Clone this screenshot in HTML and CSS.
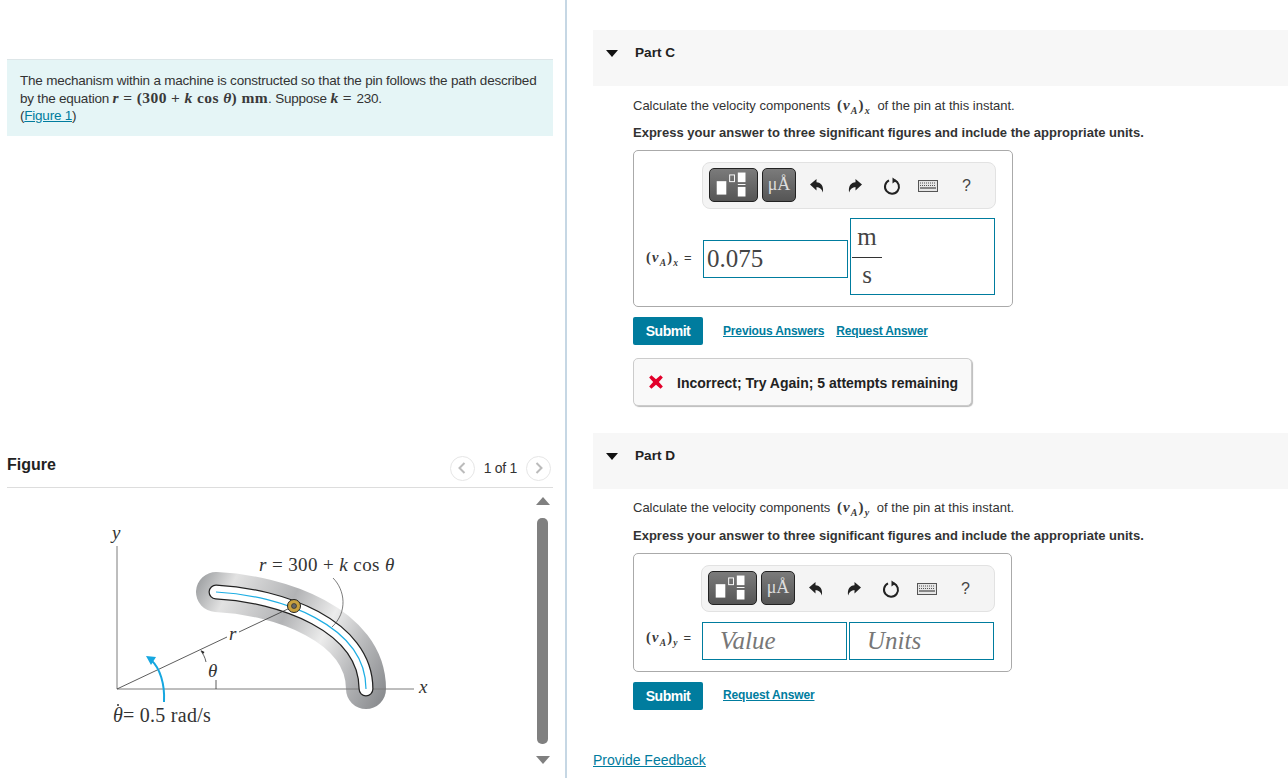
FILE: index.html
```html
<!DOCTYPE html>
<html lang="en">
<head>
<meta charset="utf-8">
<title>Mechanism velocity components</title>
<link rel="stylesheet" href="styles.css">
</head>
<body>
<svg class="defs" width="0" height="0" aria-hidden="true">
  <symbol id="i-undo" viewBox="0 0 16 16"><path d="M1 6.500 7.500 1v3.200c4.600.3 7.400 3.800 6.400 10.300C12.700 11 10.600 9.300 7.500 9.100v3.400z"/></symbol>
  <symbol id="i-redo" viewBox="0 0 16 16"><path d="M15 6.500 8.500 1v3.200C3.900 4.500 1.100 8 2.100 14.500 3.300 11 5.400 9.300 8.500 9.100v3.400z"/></symbol>
  <symbol id="i-reset" viewBox="0 0 18 18"><path d="M6 3.400a7 7 0 1 0 5.500-.2" fill="none" stroke="#222" stroke-width="2"/><path d="M7.500 .2v6.200l-4.200-3z" fill="#222" transform="rotate(180 8.500 3.400)"/></symbol>
  <symbol id="i-keys" viewBox="0 0 20 12"><rect x=".5" y=".5" width="19" height="11" fill="#e6e6e6" stroke="#555"/><path d="M2 3h16M2 5.500h16" stroke="#555" stroke-dasharray="1 1"/><path d="M2 8h16" stroke="#666" stroke-width="1.500"/></symbol>
  <symbol id="i-tpl" viewBox="0 0 49 34"><rect x="7" y="13" width="10" height="14" fill="#fff"/><rect x="20.500" y="6.500" width="5" height="7" fill="none" stroke="#fff"/><rect x="29" y="4" width="8" height="10" fill="#fff"/><rect x="29" y="16" width="8" height="1" fill="#fff"/><rect x="29" y="19" width="8" height="10" fill="#fff"/></symbol>
</svg>
<div class="page">
  <main class="left">
    <section class="intro">
      <p>The mechanism within a machine is constructed so that the pin follows the path described<br>by the equation <span class="m"><i>r</i> = (300 + <i>k</i> cos <i>θ</i>) mm</span>. Suppose <span class="m"><i>k</i> = </span>230.<br>(<a href="#fig">Figure 1</a>)</p>
    </section>
    <section class="figure" id="fig">
      <header class="fig-head">
        <h2>Figure</h2>
        <div class="pager">
          <span class="circle"><svg width="10" height="14" viewBox="0 0 10 14"><path d="M7.500 2 2.500 7l5 5" fill="none" stroke="#bbb" stroke-width="2"/></svg></span>
          <span class="count">1 of 1</span>
          <span class="circle"><svg width="10" height="14" viewBox="0 0 10 14"><path d="M2.500 2l5 5-5 5" fill="none" stroke="#bbb" stroke-width="2"/></svg></span>
        </div>
      </header>
      <div class="fig-body">
        <svg class="diagram" width="430" height="250" viewBox="90 520 430 250">
          <defs>
            <linearGradient id="band" gradientUnits="userSpaceOnUse" x1="195" y1="590" x2="388" y2="690">
              <stop offset="0" stop-color="#a2a4a6"/><stop offset=".14" stop-color="#e2e2e2"/><stop offset=".42" stop-color="#b2b3b5"/><stop offset=".62" stop-color="#ececec"/><stop offset=".8" stop-color="#b8b9bb"/><stop offset="1" stop-color="#8a8c8f"/>
            </linearGradient>
          </defs>
          <path d="M216 592C280 595 366 625 366 689" fill="none" stroke="url(#band)" stroke-width="40" stroke-linecap="round"/>
          <path d="M117 546V689H414" fill="none" stroke="#7d7d7d" stroke-width="1"/>
          <path d="M216 592C280 595 366 625 366 689" fill="none" stroke="#222" stroke-width="15" stroke-linecap="round"/>
          <path d="M216 592C280 595 366 625 366 689" fill="none" stroke="#fff" stroke-width="12.500" stroke-linecap="round"/>
          <path d="M216 592C280 595 366 625 366 689" fill="none" stroke="#1eaee4" stroke-width="1.200"/>
          <path d="M117 689 227 637M239 632 290 608" stroke="#333" stroke-width=".8"/>
          <circle cx="294" cy="606" r="6.500" fill="#c9a13f" stroke="#222"/>
          <circle cx="294" cy="606" r="2.500" fill="#666" stroke="#222" stroke-width=".6"/>
          <path d="M333 578C345 590 348 612 332 627" fill="none" stroke="#444" stroke-width=".7"/>
          <path d="M216 689V680M206 662C205 657 203 654 201 651" fill="none" stroke="#333" stroke-width=".8"/>
          <path d="M203 654l-2.500-4 4 2z" fill="#222"/>
          <path d="M164 702C165 684 160 668 151 660" fill="none" stroke="#16a7e0" stroke-width="2"/>
          <path d="M146 656l10 1-5 8z" fill="#16a7e0"/>
          <circle cx="118" cy="705" r="1" fill="#333"/>
          <g class="dg">
            <text x="112" y="539" class="it">y</text>
            <text x="419" y="693" class="it">x</text>
            <text x="229" y="640" class="it">r</text>
            <text x="208" y="677" class="it">θ</text>
            <text x="259" y="571" class="formula"><tspan class="it">r</tspan> = 300 + <tspan class="it">k</tspan> cos <tspan class="it">θ</tspan></text>
            <text x="113" y="722" class="rate"><tspan class="it">θ</tspan>= 0.5 rad/s</text>
          </g>
        </svg>
        <div class="scroll">
          <span class="tri up"></span>
          <span class="thumb"></span>
          <span class="tri down"></span>
        </div>
      </div>
    </section>
  </main>
  <div class="right">
    <section class="part part-c">
      <header class="part-head"><span class="caret"></span><h3>Part C</h3></header>
      <div class="part-body">
        <p class="q">Calculate the velocity components <span class="m">(<i>v<sub>A</sub></i>)<sub><i>x</i></sub></span> of the pin at this instant.</p>
        <p class="ask">Express your answer to three significant figures and include the appropriate units.</p>
        <div class="answer answer-c">
          <div class="toolbar">
            <button class="tb tb-tpl"><svg width="49" height="34"><use href="#i-tpl"/></svg></button>
            <button class="tb tb-mu">μÅ</button>
            <svg class="ic ic-undo" width="16" height="16"><use href="#i-undo"/></svg>
            <svg class="ic ic-redo" width="16" height="16"><use href="#i-redo"/></svg>
            <svg class="ic ic-reset" width="18" height="18"><use href="#i-reset"/></svg>
            <svg class="ic ic-keys" width="20" height="12"><use href="#i-keys"/></svg>
            <span class="help">?</span>
          </div>
          <div class="row row-c">
            <span class="lab m">(<i>v<sub>A</sub></i>)<sub><i>x</i></sub> <b>=</b></span>
            <div class="field val">0.075</div>
            <div class="field unit"><span class="frac"><span class="num">m</span><span class="den">s</span></span></div>
          </div>
        </div>
        <div class="actions">
          <button class="submit">Submit</button>
          <a href="#prev">Previous Answers</a>
          <a href="#req">Request Answer</a>
        </div>
        <div class="feedback">
          <svg width="16" height="16" viewBox="0 0 14 14"><path d="M1 3 3 1l4 3.500L11 1l2 2-3.500 4L13 11l-2 2-4-3.500L3 13l-2-2 3.500-4z" fill="#e2002b"/></svg>
          <span class="fb-text">Incorrect; Try Again; 5 attempts remaining</span>
        </div>
      </div>
    </section>
    <section class="part part-d">
      <header class="part-head"><span class="caret"></span><h3>Part D</h3></header>
      <div class="part-body">
        <p class="q">Calculate the velocity components <span class="m">(<i>v<sub>A</sub></i>)<sub><i>y</i></sub></span> of the pin at this instant.</p>
        <p class="ask">Express your answer to three significant figures and include the appropriate units.</p>
        <div class="answer answer-d">
          <div class="toolbar">
            <button class="tb tb-tpl"><svg width="49" height="34"><use href="#i-tpl"/></svg></button>
            <button class="tb tb-mu">μÅ</button>
            <svg class="ic ic-undo" width="16" height="16"><use href="#i-undo"/></svg>
            <svg class="ic ic-redo" width="16" height="16"><use href="#i-redo"/></svg>
            <svg class="ic ic-reset" width="18" height="18"><use href="#i-reset"/></svg>
            <svg class="ic ic-keys" width="20" height="12"><use href="#i-keys"/></svg>
            <span class="help">?</span>
          </div>
          <div class="row row-d">
            <span class="lab m">(<i>v<sub>A</sub></i>)<sub><i>y</i></sub> <b>=</b></span>
            <div class="field val ph">Value</div>
            <div class="field val ph">Units</div>
          </div>
        </div>
        <div class="actions">
          <button class="submit">Submit</button>
          <a href="#req">Request Answer</a>
        </div>
      </div>
    </section>
    <a class="provide" href="#feedback">Provide Feedback</a>
  </div>
</div>
</body>
</html>
```
FILE: styles.css
```css
* { box-sizing: border-box; }
html, body { margin: 0; padding: 0; height: 100%; overflow: hidden; }
body { font-family: "Liberation Sans", Arial, sans-serif; color: #333; background: #fff; }
.defs { position: absolute; }
a { color: #007c9e; }
h2, h3, p { margin: 0; }
.page { display: flex; width: 1288px; height: 778px; }

.left { width: 567px; height: 778px; padding: 59px 13px 0 7px; border-right: 2px solid #c6d7e4; flex: none; }
.intro { height: 77px; width: 546px; background: #e5f5f6; border-top: 1px solid #dde6e8; padding: 12px 13px; font-size: 13.5px; line-height: 17px; letter-spacing: -.22px; white-space: nowrap; }
.m { font-family: "Liberation Serif", serif; font-size: 15.500px; font-weight: bold; letter-spacing: .4px; color: #3a3a3a; }
.m sub { font-size: 10px; line-height: 0; }

.figure { margin-top: 314px; width: 546px; }
.fig-head { display: flex; justify-content: space-between; align-items: center; height: 38px; border-bottom: 1px solid #ddd; padding-bottom: 8px; }
.fig-head h2 { font-size: 16px; color: #222; }
.pager { display: flex; align-items: center; gap: 9px; font-size: 14px; letter-spacing: -.3px; margin-top: 7px; padding-right: 2px; }
.circle { width: 25px; height: 25px; border: 1.500px solid #e6e6e6; border-radius: 50%; display: flex; align-items: center; justify-content: center; }

.fig-body { position: relative; height: 290px; }
.diagram { position: absolute; left: 83px; top: 32px; }
.dg text { font-family: "Liberation Serif", serif; font-size: 19px; fill: #333; }
.dg .it { font-style: italic; }
.dg .formula { letter-spacing: .4px; }
.dg .rate { font-size: 20px; letter-spacing: .25px; }
.scroll { position: absolute; left: 529px; top: 9px; width: 13px; display: flex; flex-direction: column; align-items: center; }
.tri { width: 0; height: 0; flex: none; border-left: 7px solid transparent; border-right: 7px solid transparent; }
.tri.up { border-bottom: 8px solid #808080; }
.tri.down { border-top: 8px solid #808080; margin-top: 12px; }
.thumb { width: 11px; height: 226px; margin-top: 13px; background: #808080; border-radius: 5px; flex: none; }

.right { flex: 1; padding: 30px 0 0 26px; }
.part-head { position: relative; height: 56px; background: #f7f7f7; padding: 15px 0 0 42px; }
.part-head h3 { font-size: 13.600px; color: #222; }
.caret { position: absolute; left: 13px; top: 20px; width: 0; height: 0; border-left: 6px solid transparent; border-right: 6px solid transparent; border-top: 7px solid #111; }
.part-body { padding-left: 40px; }
.q { font-size: 13px; line-height: 20px; margin-top: 9px; }
.q .m { font-size: 15px; letter-spacing: 1.100px; margin: 0 3px; }
.ask { font-size: 13px; font-weight: bold; line-height: 18px; margin-top: 8px; letter-spacing: .01px; }

.answer { border: 1px solid #aaa; border-radius: 5px; margin-top: 8px; padding-top: 11px; }
.answer-c { width: 380px; height: 157px; }
.answer-d { width: 379px; height: 119px; }
.toolbar { display: flex; align-items: center; width: 294px; height: 47px; background: #f4f4f4; border: 1px solid #e2e2e2; border-radius: 8px; margin-left: 68px; padding: 0 6px; }
.answer-d .toolbar { margin-left: 67px; }
.tb { height: 34px; margin-bottom: 2px; padding: 0; border: 1px solid #222; border-radius: 5px; background: linear-gradient(#7b7b7b, #555); display: flex; align-items: center; justify-content: center; }
.tb-tpl { width: 49px; }
.tb-mu { width: 34px; margin-left: 4px; color: #ddd; font-family: "Liberation Serif", serif; font-size: 18px; }
.ic { flex: none; }
.ic-undo { margin-left: 13px; fill: #222; }
.ic-redo { margin-left: 22px; fill: #222; }
.ic-reset { margin-left: 20px; }
.ic-keys { margin-left: 17px; }
.help { margin-left: 24px; font-size: 16px; color: #444; }

.row { display: flex; align-items: center; margin-top: 9px; }
.row-c { height: 77px; }
.row-d { margin-top: 10px; }
.lab { width: 69px; padding-left: 12px; font-size: 14.500px; letter-spacing: 1.200px; white-space: nowrap; flex: none; margin-bottom: 7px; }
.lab sub { font-size: 9.500px; }
.lab b { font-family: "Liberation Sans", sans-serif; font-weight: normal; font-size: 13px; letter-spacing: 0; }
.row-c .lab { margin: 1px 0 0; }
.answer-d .lab { width: 68px; }
.field { width: 145px; border: 1px solid #007c9e; background: #fff; flex: none; }
.val { height: 38px; padding-left: 3px; font-family: "Liberation Serif", serif; font-size: 25px; line-height: 35px; color: #444; }
.row-c .val { margin-top: 4px; }
.ph { padding-left: 17px; font-style: italic; color: #777; margin-right: 2px; }
.unit { height: 77px; margin-left: 2px; font-family: "Liberation Serif", serif; font-size: 25px; color: #444; padding-left: 1px; }
.frac { display: inline-flex; flex-direction: column; align-items: center; width: 30px; }
.num { height: 39px; line-height: 36px; border-bottom: 1px solid #333; width: 30px; text-align: center; }
.den { line-height: 34px; }

.actions { display: flex; align-items: center; gap: 12px; height: 28px; margin-top: 10px; font-size: 12px; font-weight: bold; }
.actions a { letter-spacing: -.15px; margin-top: -1px; }
.submit { width: 70px; height: 28px; margin-right: 8px; border: 0; border-radius: 2px; background: #007c9e; color: #fff; font-family: "Liberation Sans", sans-serif; font-size: 14px; font-weight: bold; letter-spacing: -.5px; }
.feedback { display: flex; align-items: center; gap: 13px; width: 339px; height: 48px; margin-top: 13px; padding-left: 14px; background: #f9f9f9; border: 1px solid #ccc; border-radius: 5px; box-shadow: 1px 1px 1px #bbb; font-size: 14px; font-weight: bold; color: #222; }
.fb-text { margin-top: 1px; }
.part-d { margin-top: 27px; }
.part-d .q { margin-top: 8px; }
.part-d .ask { margin-top: 9px; }
.part-d .actions a { margin-top: -3px; }
.provide { display: inline-block; margin-top: 41px; font-size: 14px; line-height: 18px; }
```
